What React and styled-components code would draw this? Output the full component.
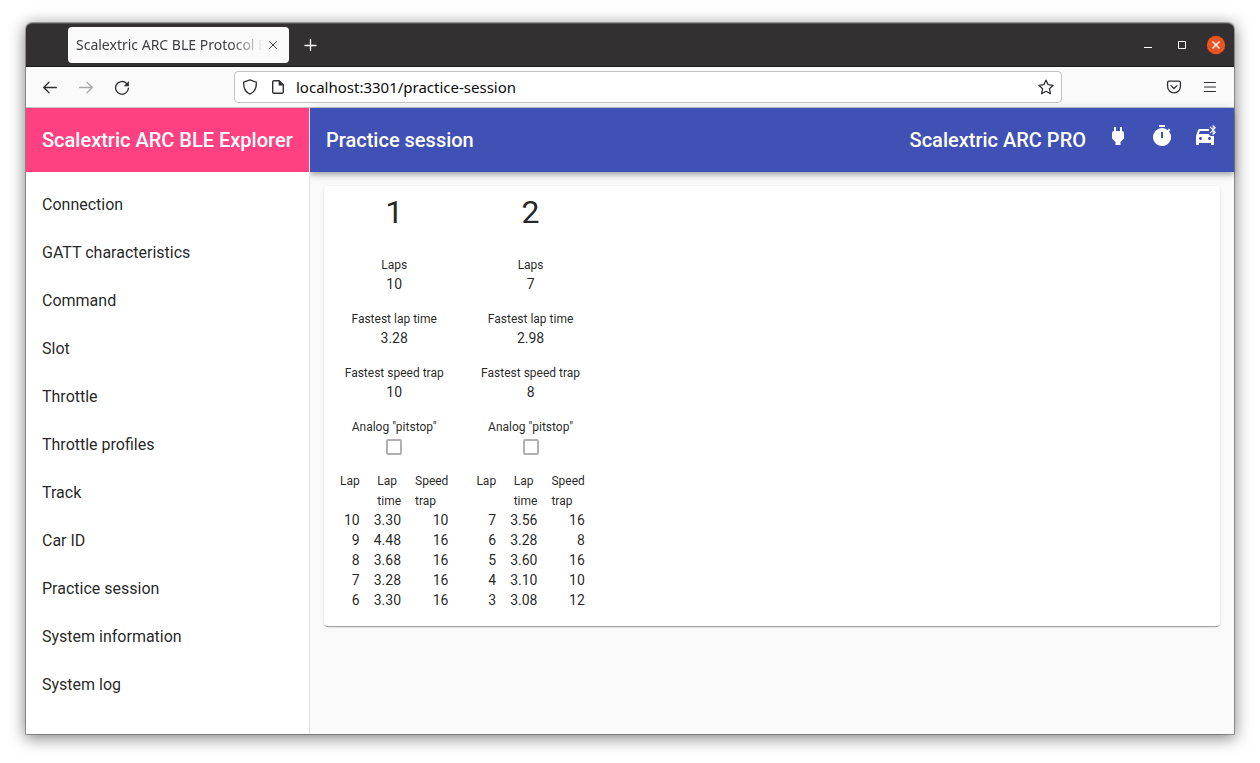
import React, { useState } from 'react';
import styled, { createGlobalStyle } from 'styled-components';
import { MdPower, MdTimer, MdBluetoothDrive } from 'react-icons/md';

const GlobalStyle = createGlobalStyle`
  *, *::before, *::after {
    box-sizing: border-box;
  }

  body {
    margin: 0;
    background-color: white;
    color: rgba(0, 0, 0, 0.87);
    font-family: Roboto, sans-serif;
    font-size: 14px;
    line-height: 20px;
  }

  button, input {
    font: inherit;
    color: inherit;
  }
`;

const Desktop = styled.div`
  display: flex;
  min-height: 100vh;
  padding: 23px 26px 29px;
`;

const Window = styled.div`
  flex: 1;
  min-width: 0;
  display: flex;
  flex-direction: column;
  border-radius: 6px 6px 0 0;
  box-shadow: 0 0 0 1px rgba(0, 0, 0, 0.28), 0 3px 16px 1px rgba(0, 0, 0, 0.5);
`;

const TitleBar = styled.div`
  display: flex;
  align-items: center;
  height: 44px;
  padding: 0 4px 0 42px;
  border-top: 1px solid #515050;
  border-bottom: 1px solid #1c1b1b;
  border-radius: 6px 6px 0 0;
  background-color: #333031;
  color: white;
`;

const Tab = styled.div`
  display: flex;
  align-items: center;
  width: 221px;
  height: 36px;
  padding: 0 6px 0 8px;
  border-radius: 4px;
  background-color: #fafafa;
  color: #3e3e44;
`;

const TabTitle = styled.span`
  flex: 1;
  overflow: hidden;
  white-space: nowrap;
  font-family: 'Noto Sans', sans-serif;
  font-size: 14px;
  line-height: 22px;
  mask-image: linear-gradient(to left, transparent, black 32px);
`;

const IconButton = styled.button`
  display: flex;
  align-items: center;
  justify-content: center;
  width: ${({ $size }) => $size}px;
  height: ${({ $size }) => $size}px;
  padding: 0;
  border: none;
  background: none;

  &:disabled {
    opacity: 0.4;
  }
`;

const NewTab = styled(IconButton)`
  margin-left: 6px;
`;

const WindowControls = styled.div`
  display: flex;
  gap: 6px;
  margin-left: auto;
`;

const LineIcon = styled.svg`
  display: block;
  fill: none;
  stroke: currentColor;
  stroke-width: ${({ $weight }) => $weight || 1.3};
  stroke-linecap: round;
  stroke-linejoin: round;
`;

const NavBar = styled.div`
  display: flex;
  align-items: center;
  gap: 4px;
  height: 41px;
  padding: 0 8px;
  border-bottom: 1px solid #c6c6c6;
  background-color: #fafafa;
  color: #2f2f33;
`;

const UrlBar = styled.label`
  flex: 1;
  display: flex;
  align-items: center;
  gap: 12px;
  height: 32px;
  margin: 0 92px;
  padding: 0 7px;
  border: 1px solid #c2c2c2;
  border-radius: 4px;
  background-color: white;
`;

const UrlInput = styled.input`
  flex: 1;
  min-width: 0;
  margin-left: -2px;
  padding: 0;
  border: none;
  outline: none;
  background: none;
  color: #0c0c0d;
  font-family: 'Noto Sans', sans-serif;
  font-size: 15px;
`;

const Page = styled.div`
  flex: 1;
  display: flex;
  background-color: #fafafa;
`;

const Sidebar = styled.aside`
  position: relative;
  z-index: 1;
  flex: none;
  width: 284px;
  border-right: 1px solid #e0e0e0;
  background-color: white;
`;

const Toolbar = styled.header`
  display: flex;
  align-items: center;
  height: 64px;
  padding: 0 16px;
  color: white;
  white-space: nowrap;
`;

const SidebarToolbar = styled(Toolbar)`
  background-color: #ff4081;
`;

const MainToolbar = styled(Toolbar)`
  gap: 20px;
  background-color: #3f51b5;
  box-shadow: 0 2px 4px -1px rgba(0, 0, 0, 0.2), 0 4px 5px 0 rgba(0, 0, 0, 0.14),
    0 1px 10px 0 rgba(0, 0, 0, 0.12);
`;

const Heading = styled.h1`
  margin: 0;
  font-size: 20px;
  font-weight: 500;
  line-height: 32px;
`;

const DeviceName = styled(Heading).attrs({ as: 'span' })`
  margin-left: auto;
`;

const StatusIcons = styled.div`
  display: flex;
  gap: 20px;
  padding-bottom: 8px;

  svg {
    display: block;
    width: 24px;
    height: 24px;
  }
`;

const NavList = styled.nav`
  display: flex;
  flex-direction: column;
  padding-top: 9px;
`;

const NavLink = styled.a`
  display: flex;
  align-items: center;
  height: 48px;
  padding: 0 16px;
  color: inherit;
  font-size: 16px;
  text-decoration: none;
`;

const Main = styled.main`
  flex: 1;
  min-width: 0;
`;

const Card = styled.section`
  display: flex;
  gap: 28px;
  margin: 14px;
  padding: 0 16px 16px;
  border-radius: 4px;
  background-color: white;
  box-shadow: 0 2px 1px -1px rgba(0, 0, 0, 0.2), 0 1px 1px 0 rgba(0, 0, 0, 0.14),
    0 1px 3px 0 rgba(0, 0, 0, 0.12);
`;

const Car = styled.div`
  display: flex;
  flex-direction: column;
  align-items: center;
  gap: 14px;
`;

const CarId = styled.h2`
  margin: 0;
  padding-bottom: 2px;
  font-size: 32px;
  font-weight: 400;
  line-height: 52px;
`;

const Stat = styled.div`
  text-align: center;
`;

const StatRow = styled.div`
  height: 20px;
`;

const SmallText = styled.span`
  font-size: 12px;
`;

const Checkbox = styled.input`
  display: block;
  appearance: none;
  width: 16px;
  height: 16px;
  margin: 3px auto 1px;
  border: 2px solid #b0b0b0;
  border-radius: 2px;

  &:checked {
    border-color: #ff4081;
    background-color: #ff4081;
  }
`;

const LapTable = styled.table`
  border-collapse: collapse;

  th, td {
    height: 20px;
    padding: 0 0 0 14px;
    font-weight: 400;
    text-align: right;
    vertical-align: top;
  }

  th:first-child, td:first-child {
    padding-left: 0;
  }
`;

const HeadText = styled.div`
  display: inline-block;
  vertical-align: top;
  text-align: left;
`;

const navItems = [
  ['Connection', 'connection'],
  ['GATT characteristics', 'gatt-characteristics'],
  ['Command', 'command'],
  ['Slot', 'slot'],
  ['Throttle', 'throttle'],
  ['Throttle profiles', 'throttle-profiles'],
  ['Track', 'track'],
  ['Car ID', 'car-id'],
  ['Practice session', 'practice-session'],
  ['System information', 'system-information'],
  ['System log', 'system-log'],
];

const cars = [
  {
    id: 1,
    laps: 10,
    fastestLap: '3.28',
    fastestSpeedTrap: 10,
    history: [
      [10, '3.30', 10],
      [9, '4.48', 16],
      [8, '3.68', 16],
      [7, '3.28', 16],
      [6, '3.30', 16],
    ],
  },
  {
    id: 2,
    laps: 7,
    fastestLap: '2.98',
    fastestSpeedTrap: 8,
    history: [
      [7, '3.56', 16],
      [6, '3.28', 8],
      [5, '3.60', 16],
      [4, '3.10', 10],
      [3, '3.08', 12],
    ],
  },
];

const Icon = ({ d, size = 16, weight }) => (
  <LineIcon width={size} height={size} viewBox={`0 0 ${size} ${size}`} $weight={weight} aria-hidden="true">
    <path d={d} />
  </LineIcon>
);

const BrowserTitleBar = () => (
  <TitleBar>
    <Tab>
      <TabTitle>Scalextric ARC BLE Protocol Explorer</TabTitle>
      <IconButton $size={20} aria-label="Close tab">
        <Icon size={10} weight={1} d="M1.5 1.5l7 7M8.5 1.5l-7 7" />
      </IconButton>
    </Tab>
    <NewTab $size={32} aria-label="New tab">
      <Icon size={14} weight={1.3} d="M6.5 1.5v11M1 7.5h11" />
    </NewTab>
    <WindowControls>
      <IconButton $size={28} aria-label="Minimize">
        <svg width="10" height="10">
          <path fill="white" d="M1 7h8v1H1z" />
        </svg>
      </IconButton>
      <IconButton $size={28} aria-label="Maximize">
        <svg width="10" height="10">
          <path fill="none" stroke="white" d="M1.5 1.5h7v7h-7z" />
        </svg>
      </IconButton>
      <IconButton $size={28} aria-label="Close window">
        <svg width="20" height="20">
          <circle cx="10" cy="10" r="9.2" fill="#e95420" />
          <path fill="none" stroke="white" strokeWidth="1.4" d="M6.5 6.5l7 7M13.5 6.5l-7 7" />
        </svg>
      </IconButton>
    </WindowControls>
  </TitleBar>
);

const BrowserNavBar = () => {
  const [url, setUrl] = useState('localhost:3301/practice-session');

  return (
    <NavBar>
      <IconButton $size={32} aria-label="Back">
        <Icon d="M14.3 8.5H1.7M7 3.2L1.7 8.5 7 13.8" />
      </IconButton>
      <IconButton $size={32} aria-label="Forward" disabled>
        <Icon d="M1.7 8.5h12.6M9 3.2L14.3 8.5 9 13.8" />
      </IconButton>
      <IconButton $size={32} aria-label="Reload">
        <svg width="16" height="16" viewBox="0 0 16 16">
          <path
            fill="none"
            stroke="currentColor"
            strokeWidth="1.3"
            strokeLinecap="round"
            d="M14.4 9.2A6.4 6.4 0 1 1 12.4 4.2"
          />
          <path fill="currentColor" d="M14.9 2v4.7a.5.5 0 0 1-.5.5H9.7z" />
        </svg>
      </IconButton>
      <UrlBar>
        <Icon d="M8 .9L14.3 3.2C14.6 8.6 13 12.9 8 15.2 3 12.9 1.4 8.6 1.7 3.2z" />
        <svg width="16" height="16" viewBox="0 0 16 16">
          <path
            fill="none"
            stroke="currentColor"
            strokeWidth="1.4"
            strokeLinejoin="round"
            d="M4 1.7h5.2L13.3 5.8v7.2a1.3 1.3 0 0 1-1.3 1.3H4A1.3 1.3 0 0 1 2.7 13V3A1.3 1.3 0 0 1 4 1.7z"
          />
          <path fill="currentColor" d="M8.6 1.5v5h5z" />
        </svg>
        <UrlInput aria-label="Address" value={url} onChange={(e) => setUrl(e.target.value)} />
        <Icon d="M8 1.1l2.1 4.6 5 .6-3.7 3.4 1 5L8 12.3l-4.4 2.4 1-5L.9 6.3l5-.6z" />
      </UrlBar>
      <IconButton $size={32} aria-label="Save to Pocket">
        <Icon d="M2.9 2.2h10.2a1.3 1.3 0 0 1 1.3 1.3v3.9a6.4 6.4 0 0 1-12.8 0V3.5a1.3 1.3 0 0 1 1.3-1.3zM5 6.6L8 9.5l3-2.9" />
      </IconButton>
      <IconButton $size={32} aria-label="Menu">
        <Icon weight={1.2} d="M2.5 3.5h11M2.5 8h11M2.5 12.5h11" />
      </IconButton>
    </NavBar>
  );
};

const CarStat = ({ label, value }) => (
  <Stat>
    <StatRow>
      <SmallText>{label}</SmallText>
    </StatRow>
    <StatRow>{value}</StatRow>
  </Stat>
);

const CarPanel = ({ car }) => {
  const [pitstop, setPitstop] = useState(false);
  const checkboxId = `pitstop-${car.id}`;

  return (
    <Car>
      <CarId>{car.id}</CarId>
      <CarStat label="Laps" value={car.laps} />
      <CarStat label="Fastest lap time" value={car.fastestLap} />
      <CarStat label="Fastest speed trap" value={car.fastestSpeedTrap} />
      <Stat>
        <StatRow>
          <SmallText as="label" htmlFor={checkboxId}>Analog "pitstop"</SmallText>
        </StatRow>
        <Checkbox
          id={checkboxId}
          type="checkbox"
          checked={pitstop}
          onChange={(e) => setPitstop(e.target.checked)}
        />
      </Stat>
      <LapTable>
        <thead>
          <tr>
            <th>
              <StatRow><SmallText>Lap</SmallText></StatRow>
            </th>
            <th>
              <HeadText>
                <StatRow><SmallText>Lap</SmallText></StatRow>
                <StatRow><SmallText>time</SmallText></StatRow>
              </HeadText>
            </th>
            <th>
              <HeadText>
                <StatRow><SmallText>Speed</SmallText></StatRow>
                <StatRow><SmallText>trap</SmallText></StatRow>
              </HeadText>
            </th>
          </tr>
        </thead>
        <tbody>
          {car.history.map(([lap, time, speed]) => (
            <tr key={lap}>
              <td>{lap}</td>
              <td>{time}</td>
              <td>{speed}</td>
            </tr>
          ))}
        </tbody>
      </LapTable>
    </Car>
  );
};

const App = () => (
  <>
    <GlobalStyle />
    <Desktop>
      <Window>
        <BrowserTitleBar />
        <BrowserNavBar />
        <Page>
          <Sidebar>
            <SidebarToolbar as="div">
              <Heading as="span">Scalextric ARC BLE Explorer</Heading>
            </SidebarToolbar>
            <NavList>
              {navItems.map(([label, path]) => (
                <NavLink key={path} href={`#${path}`}>
                  {label}
                </NavLink>
              ))}
            </NavList>
          </Sidebar>
          <Main>
            <MainToolbar>
              <Heading>Practice session</Heading>
              <DeviceName>Scalextric ARC PRO</DeviceName>
              <StatusIcons>
                <MdPower />
                <MdTimer />
                <MdBluetoothDrive />
              </StatusIcons>
            </MainToolbar>
            <Card>
              {cars.map((car) => (
                <CarPanel key={car.id} car={car} />
              ))}
            </Card>
          </Main>
        </Page>
      </Window>
    </Desktop>
  </>
);

export default App;
